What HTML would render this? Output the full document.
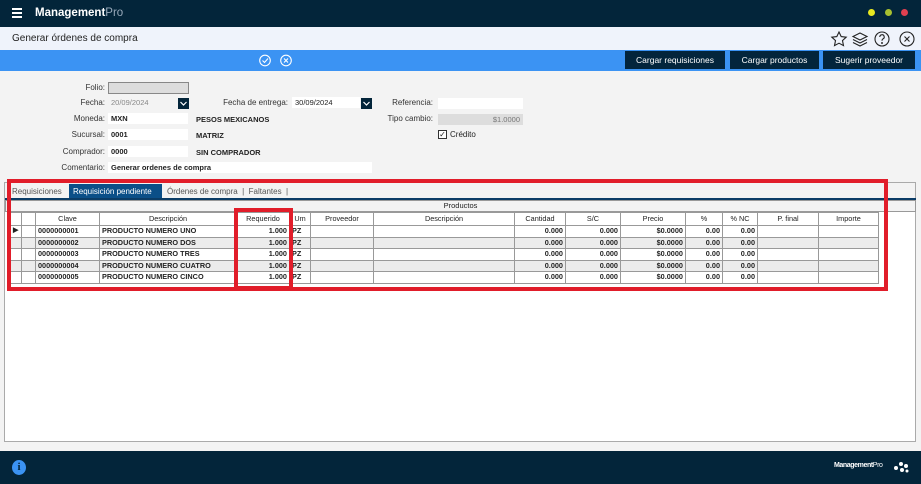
<!DOCTYPE html>
<html><head><meta charset="utf-8"><style>
*{box-sizing:border-box;margin:0;padding:0}
body{width:921px;height:484px;overflow:hidden;background:#f3f3f3;font-family:"Liberation Sans",sans-serif;position:relative;font-size:8px;color:#222}
.a{position:absolute}
.lbl{position:absolute;text-align:right;font-size:8px;color:#333}
.inp{position:absolute;background:#fff;height:11px;font-size:7.5px;font-weight:bold;padding:1px 3px;line-height:9px}
.btn{position:absolute;top:51px;height:18px;background:#03253c;color:#fff;font-size:8.5px;text-align:center;line-height:18px}
table{border-collapse:collapse;position:absolute;table-layout:fixed}
td{border:1px solid #999;height:11.5px;font-size:7.3px;font-weight:bold;padding:0 2px;white-space:nowrap;overflow:hidden;line-height:10px}
.h td{font-weight:normal;text-align:center;background:#fff;height:13px}
.r{text-align:right}
tr.g td{background:#ececec}
</style></head><body>
<div class="a" style="left:0;top:0;width:921px;height:27px;background:#03253a"></div>
<div class="a" style="left:12px;top:8px;width:10px;height:2px;background:#fff;box-shadow:0 4px 0 #fff,0 8px 0 #fff"></div>
<div class="a" style="left:35px;top:7px;color:#fff;font-size:11.5px;font-weight:bold">Management<span style="font-weight:normal;color:#9ab">Pro</span></div>
<div class="a" style="left:868px;top:9px;width:7px;height:7px;border-radius:50%;background:#e8e820"></div>
<div class="a" style="left:885px;top:9px;width:7px;height:7px;border-radius:50%;background:#a8c030"></div>
<div class="a" style="left:901px;top:9px;width:7px;height:7px;border-radius:50%;background:#e04050"></div>
<div class="a" style="left:0;top:27px;width:921px;height:23px;background:#eff3fb"></div>
<div class="a" style="left:12px;top:33px;font-size:10px;color:#222">Generar órdenes de compra</div>
<svg class="a" style="left:830px;top:30px" width="88" height="18" viewBox="0 0 88 18" fill="none" stroke="#222" stroke-width="1.1">
<path d="M9 2l2.2 4.6 5 .6-3.7 3.4 1 5L9 13.2 4.5 15.6l1-5L1.8 7.2l5-.6z"/>
<path d="M30 3l7 3.5-7 3.5-7-3.5z M23 9.5l7 3.5 7-3.5 M23 12.5l7 3.5 7-3.5"/>
<circle cx="52" cy="9" r="7"/><path d="M49.8 7a2.2 2.2 0 1 1 3 2c-.8.4-.8 1-.8 1.8"/><circle cx="52" cy="13" r=".4"/>
<circle cx="77" cy="9" r="7"/><path d="M74.5 6.5l5 5M79.5 6.5l-5 5"/></svg>
<div class="a" style="left:0;top:50px;width:921px;height:21px;background:#3b93f3"></div>
<svg class="a" style="left:259px;top:54px" width="34" height="13" fill="none" stroke="#fff" stroke-width="1.1"><circle cx="6" cy="6.5" r="5.3"/><path d="M3.5 6.5l2 2 3.5-4"/><circle cx="27" cy="6.5" r="5.3"/><path d="M25 4.5l4 4M29 4.5l-4 4"/></svg>
<div class="btn" style="left:625px;width:100px">Cargar requisiciones</div>
<div class="btn" style="left:730px;width:89px">Cargar productos</div>
<div class="btn" style="left:823px;width:92px">Sugerir proveedor</div>

<div class="lbl" style="left:40px;width:65px;top:83px">Folio:</div>
<div class="a" style="left:108px;top:82px;width:81px;height:12px;background:#ddd;border:1px solid #888"></div>
<div class="lbl" style="left:40px;width:65px;top:98px">Fecha:</div>
<div class="inp" style="left:108px;top:97px;width:70px;background:none;font-weight:normal;color:#888">20/09/2024</div>
<svg class="a" style="left:178px;top:98px" width="11" height="11"><rect width="11" height="11" fill="#03253a"/><path d="M2.5 4l3 3 3-3" fill="none" stroke="#fff" stroke-width="1.2"/></svg>
<div class="lbl" style="left:200px;width:88px;top:98px">Fecha de entrega:</div>
<div class="inp" style="left:292px;top:97px;width:68px;font-weight:normal">30/09/2024</div>
<svg class="a" style="left:361px;top:98px" width="11" height="11"><rect width="11" height="11" fill="#03253a"/><path d="M2.5 4l3 3 3-3" fill="none" stroke="#fff" stroke-width="1.2"/></svg>
<div class="lbl" style="left:380px;width:53px;top:98px">Referencia:</div>
<div class="inp" style="left:438px;top:98px;width:85px"></div>
<div class="lbl" style="left:40px;width:65px;top:114px">Moneda:</div>
<div class="inp" style="left:108px;top:113px;width:80px">MXN</div>
<div class="a" style="left:196px;top:115px;font-size:7.5px;font-weight:bold">PESOS MEXICANOS</div>
<div class="lbl" style="left:370px;width:63px;top:114px">Tipo cambio:</div>
<div class="inp" style="left:438px;top:114px;width:85px;background:#ddd;font-weight:normal;color:#777;text-align:right">$1.0000</div>
<div class="lbl" style="left:40px;width:65px;top:130px">Sucursal:</div>
<div class="inp" style="left:108px;top:129px;width:80px">0001</div>
<div class="a" style="left:196px;top:131px;font-size:7.5px;font-weight:bold">MATRIZ</div>
<div class="a" style="left:438px;top:130px;width:9px;height:9px;border:1px solid #333;background:#fff;font-size:8px;line-height:7px;text-align:center">✓</div>
<div class="a" style="left:450px;top:130px;font-size:8px">Crédito</div>
<div class="lbl" style="left:40px;width:65px;top:147px">Comprador:</div>
<div class="inp" style="left:108px;top:146px;width:80px">0000</div>
<div class="a" style="left:196px;top:148px;font-size:7.5px;font-weight:bold">SIN COMPRADOR</div>
<div class="lbl" style="left:40px;width:65px;top:163px">Comentario:</div>
<div class="inp" style="left:108px;top:162px;width:264px">Generar ordenes de compra</div>

<div class="a" style="left:4px;top:182px;width:912px;height:260px;border:1px solid #aaa;background:#f3f3f3"></div>
<div class="a" style="left:5px;top:199px;width:910px;height:242px;background:#fff"></div>
<div class="a" style="left:12px;top:187px;font-size:8px;color:#555">Requisiciones</div>
<div class="a" style="left:69px;top:184px;width:93px;height:15px;background:#0b4f88;color:#fff;font-size:8px;padding:3px 4px">Requisición pendiente</div>
<div class="a" style="left:167px;top:187px;font-size:8px;color:#555">Órdenes de compra &nbsp;|&nbsp; Faltantes &nbsp;|</div>
<div class="a" style="left:5px;top:198px;width:911px;height:2px;background:#0b3c66"></div>
<div class="a" style="left:5px;top:200px;width:911px;height:12px;background:#f3f3f3;border:1px solid #999;text-align:center;font-size:7.5px;line-height:10px">Productos</div>
<table style="left:10px;top:212px;width:868px">
<colgroup><col style="width:11px"><col style="width:14px"><col style="width:64px"><col style="width:137px"><col style="width:53px"><col style="width:21px"><col style="width:63px"><col style="width:141px"><col style="width:51px"><col style="width:55px"><col style="width:65px"><col style="width:37px"><col style="width:35px"><col style="width:61px"><col style="width:60px"></colgroup>
<tr class="h"><td></td><td></td><td>Clave</td><td>Descripción</td><td>Requerido</td><td>Um</td><td>Proveedor</td><td>Descripción</td><td>Cantidad</td><td>S/C</td><td>Precio</td><td>%</td><td>% NC</td><td>P. final</td><td>Importe</td></tr>
<tr><td style="font-size:7px">▶</td><td></td><td>0000000001</td><td>PRODUCTO NUMERO UNO</td><td class="r">1.000</td><td>PZ</td><td></td><td></td><td class="r">0.000</td><td class="r">0.000</td><td class="r">$0.0000</td><td class="r">0.00</td><td class="r">0.00</td><td></td><td></td></tr>
<tr class="g"><td></td><td></td><td>0000000002</td><td>PRODUCTO NUMERO DOS</td><td class="r">1.000</td><td>PZ</td><td></td><td></td><td class="r">0.000</td><td class="r">0.000</td><td class="r">$0.0000</td><td class="r">0.00</td><td class="r">0.00</td><td></td><td></td></tr>
<tr><td></td><td></td><td>0000000003</td><td>PRODUCTO NUMERO TRES</td><td class="r">1.000</td><td>PZ</td><td></td><td></td><td class="r">0.000</td><td class="r">0.000</td><td class="r">$0.0000</td><td class="r">0.00</td><td class="r">0.00</td><td></td><td></td></tr>
<tr class="g"><td></td><td></td><td>0000000004</td><td>PRODUCTO NUMERO CUATRO</td><td class="r">1.000</td><td>PZ</td><td></td><td></td><td class="r">0.000</td><td class="r">0.000</td><td class="r">$0.0000</td><td class="r">0.00</td><td class="r">0.00</td><td></td><td></td></tr>
<tr><td></td><td></td><td>0000000005</td><td>PRODUCTO NUMERO CINCO</td><td class="r">1.000</td><td>PZ</td><td></td><td></td><td class="r">0.000</td><td class="r">0.000</td><td class="r">$0.0000</td><td class="r">0.00</td><td class="r">0.00</td><td></td><td></td></tr>
</table>
<div class="a" style="left:7px;top:179px;width:881px;height:112px;border:4px solid #e11d2a"></div>
<div class="a" style="left:234px;top:208px;width:59px;height:82px;border:4px solid #e11d2a"></div>

<div class="a" style="left:0;top:451px;width:921px;height:33px;background:#03253a"></div>
<div class="a" style="left:12px;top:460px;width:14px;height:15px;border-radius:50%;background:#3b93f3;color:#03253a;font-weight:bold;font-size:11px;text-align:center;line-height:15px;font-family:'Liberation Serif',serif">i</div>
<div class="a" style="left:834px;top:462px;color:#fff;font-size:7px;font-weight:bold;letter-spacing:-.4px">Management<span style="font-weight:normal">Pro</span></div>
<svg class="a" style="left:892px;top:459px" width="18" height="15" fill="#fff"><circle cx="4" cy="9" r="2"/><circle cx="9" cy="5" r="2"/><circle cx="14" cy="7" r="2"/><circle cx="10" cy="11" r="2"/><circle cx="15" cy="12" r="1.5"/></svg>
</body></html>
